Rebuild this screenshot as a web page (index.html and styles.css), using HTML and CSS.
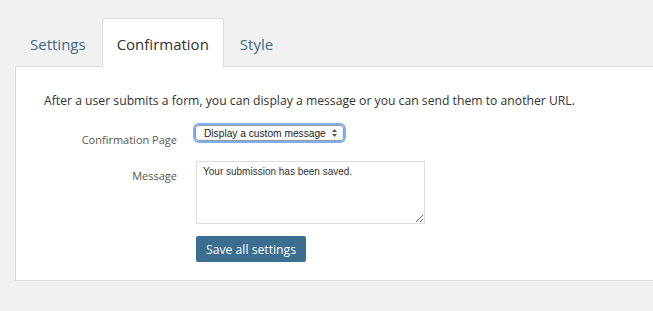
FILE: index.html
```html
<!DOCTYPE html>
<html lang="en">
<head>
  <meta charset="UTF-8">
  <title>Form settings</title>
  <link rel="stylesheet" href="styles.css">
</head>
<body>

  <ul class="tabs">
    <li class="tab">Settings</li>
    <li class="tab ativo">Confirmation</li>
    <li class="tab">Style</li>
  </ul>

  <div class="painel">
    <p class="descricao">After a user submits a form, you can display a message or you can send them to another URL.</p>

    <div class="linha">
      <label class="rotulo">Confirmation Page</label>
      <div class="seletor">
        <span>Display a custom message</span>
        <svg class="setas" width="7" height="10" viewBox="0 0 7 10">
          <path d="M1 4 L3.5 1 L6 4 Z" fill="#555"/>
          <path d="M1 6 L3.5 9 L6 6 Z" fill="#555"/>
        </svg>
      </div>
    </div>

    <div class="linha">
      <label class="rotulo">Message</label>
      <textarea class="mensagem">Your submission has been saved.</textarea>
    </div>

    <div class="linha">
      <span class="rotulo"></span>
      <button class="botao">Save all settings</button>
    </div>
  </div>

</body>
</html>
```

FILE: styles.css
```css
body {
  margin: 0;
  background-color: #f1f1f1;
  font-family: 'Open Sans', sans-serif;
  color: #333;
}
.tabs {
  list-style: none;
  margin: 0;
  padding: 18px 0 0 15px;
  display: flex;
  gap: 1px;
}
.tab {
  height: 47px;
  line-height: 50px;
  padding: 0 14px;
  font-size: 15px;
  color: #3d6a8e;
  border: 1px solid transparent;
  border-bottom: none;
}
.tab.ativo {
  background-color: #fff;
  color: #333;
  border-color: #ddd;
  border-radius: 3px 3px 0 0;
  margin-bottom: -1px;
  height: 48px;
  position: relative;
}
.painel {
  margin-left: 15px;
  background-color: #fff;
  border: 1px solid #ddd;
  border-right: none;
  padding: 25px 0 18px 0;
}
.descricao {
  margin: 0 0 16px 28px;
  font-size: 12.2px;
  line-height: 17px;
}
.linha {
  display: flex;
  align-items: flex-start;
  gap: 18px;
  margin-bottom: 12px;
}
.linha:first-of-type {
  margin-bottom: 13px;
}
.linha:last-child {
  margin-bottom: 0;
}
.rotulo {
  width: 133px;
  margin-left: 28px;
  padding-top: 7px;
  text-align: right;
  font-size: 11px;
  line-height: 16px;
  color: #5b5550;
}
.seletor {
  width: 134px;
  height: 14px;
  border: 1px solid #999;
  border-radius: 4px;
  box-shadow: 0 0 0 2px #7fadf2;
  display: flex;
  align-items: center;
  justify-content: space-between;
  padding: 0 5px 0 8px;
  white-space: nowrap;
  font-family: 'Liberation Sans', Arial, sans-serif;
  font-size: 10.2px;
  color: #222;
}
.setas {
  display: block;
}
.mensagem {
  width: 229px;
  height: 63px;
  box-sizing: border-box;
  border: 1px solid #ddd;
  padding: 4px 6px;
  font-family: 'Liberation Sans', Arial, sans-serif;
  font-size: 10px;
  color: #333;
  margin: 0 0 0 1px;
  resize: both;
}
.botao {
  margin-left: 1px;
  width: 110px;
  height: 26px;
  background-color: #3b6e8f;
  color: #fff;
  border: none;
  border-radius: 2px;
  font-family: 'Open Sans', sans-serif;
  font-size: 12.2px;
  cursor: pointer;
}
```
